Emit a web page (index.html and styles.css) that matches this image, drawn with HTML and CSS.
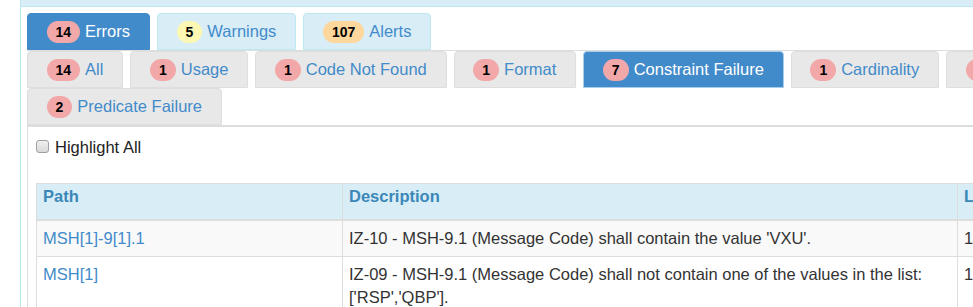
FILE: index.html
```html
<!DOCTYPE html>
<html>
<head>
<meta charset="utf-8">
<title>Validation Report</title>
<link rel="stylesheet" href="styles.css">
</head>
<body>
<div class="panel">
  <div class="panel-heading"></div>
  <div class="panel-body">
    <ul class="nav main-nav">
      <li class="tab active"><span class="badge b-err">14</span>Errors</li>
      <li class="tab info"><span class="badge b-warn">5</span>Warnings</li>
      <li class="tab info"><span class="badge b-alert">107</span>Alerts</li>
    </ul>
    <ul class="nav sub-nav">
      <li class="tab gray"><span class="badge b-err">14</span>All</li>
      <li class="tab gray"><span class="badge b-err">1</span>Usage</li>
      <li class="tab gray"><span class="badge b-err">1</span>Code Not Found</li>
      <li class="tab gray"><span class="badge b-err">1</span>Format</li>
      <li class="tab active"><span class="badge b-err">7</span>Constraint Failure</li>
      <li class="tab gray"><span class="badge b-err">1</span>Cardinality</li>
      <li class="tab gray"><span class="badge b-err">1</span>Length</li>
      <li class="tab gray"><span class="badge b-err">2</span>Predicate Failure</li>
    </ul>
    <div class="tab-content">
      <label class="highlight"><input type="checkbox" class="check">Highlight All</label>
      <table class="report">
        <colgroup>
          <col class="c-path">
          <col class="c-desc">
          <col class="c-line">
        </colgroup>
        <thead>
          <tr><th>Path</th><th>Description</th><th>Line</th></tr>
        </thead>
        <tbody>
          <tr>
            <td><a class="link" href="#">MSH[1]-9[1].1</a></td>
            <td>IZ-10 - MSH-9.1 (Message Code) shall contain the value 'VXU'.</td>
            <td>1</td>
          </tr>
          <tr>
            <td><a class="link" href="#">MSH[1]</a></td>
            <td>IZ-09 - MSH-9.1 (Message Code) shall not contain one of the values in the list: ['RSP','QBP'].</td>
            <td>1</td>
          </tr>
        </tbody>
      </table>
    </div>
  </div>
</div>
</body>
</html>
```
FILE: styles.css
```css
html, body {
  margin: 0;
  padding: 0;
  overflow: hidden;
  background: #fff;
}
body {
  font-family: "Liberation Sans", Arial, sans-serif;
  font-size: 16.5px;
  line-height: 22.86px;
  color: #333;
}
.panel {
  margin-left: 20px;
  width: 1150px;
  border-left: 1px solid #bce8f1;
  border-right: 1px solid #bce8f1;
}
.panel-heading {
  height: 6px;
  background: #d9edf7;
  border-bottom: 1px solid #bce8f1;
}
.panel-body {
  padding: 6px 0 0 6px;
}
.nav {
  list-style: none;
  margin: 0;
  padding: 0;
  display: flex;
  flex-wrap: wrap;
  column-gap: 7px;
}
.main-nav {
  border-bottom: 1px solid #ddd;
}
.tab {
  display: flex;
  align-items: center;
  gap: 5px;
  height: 37px;
  box-sizing: border-box;
  padding: 0 19px;
  border: 1px solid transparent;
  border-radius: 4px 4px 0 0;
  color: #428bca;
  white-space: nowrap;
}
.main-nav .tab {
  padding: 0 19px 0 18.5px;
}
.tab.active {
  background: #428bca;
  border-color: #428bca;
  color: #fff;
}
.sub-nav .tab {
  padding: 0 19px 0 18.5px;
}
.sub-nav .tab.active {
  border-color: #a9cdea;
}
.tab.info {
  background: #d9edf7;
  border-color: #bce8f1;
}
.tab.gray {
  background: #e8e8e8;
  border-color: #dedede;
}
.badge {
  display: inline-block;
  font-size: 14px;
  font-weight: bold;
  color: #000;
  line-height: 16px;
  padding: 3px 9px;
  border-radius: 11px;
}
.b-err { background: #f2a8a8; }
.b-warn { background: #fcf8b4; }
.b-alert { background: #fed79c; }
.tab-content {
  border-left: 1px solid #ddd;
  border-top: 2px solid #ddd;
  padding: 8px 0 0 8px;
}
.highlight {
  display: flex;
  align-items: center;
  height: 24px;
  color: #222;
}
.check {
  appearance: none;
  -webkit-appearance: none;
  box-sizing: border-box;
  width: 13px;
  height: 13px;
  margin: 0 6px 1px 0;
  border: 1px solid #a0a0a0;
  border-radius: 3px;
  background: linear-gradient(#f0f0f0, #d8d8d8);
}
.report {
  margin-top: 24px;
  border-collapse: collapse;
  table-layout: fixed;
  width: 1121px;
}
.c-path { width: 306px; }
.c-desc { width: 615px; }
.c-line { width: 200px; }
.report th, .report td {
  border: 1px solid #ddd;
  padding: 6px;
  text-align: left;
  vertical-align: top;
}
.report th {
  background: #d9edf7;
  color: #3a88b8;
  font-weight: bold;
  padding: 1px 6px 11px;
  border-bottom: 2px solid #ddd;
}
.report tbody tr:nth-child(odd) td {
  background: #f9f9f9;
}
.link {
  color: #428bca;
  text-decoration: none;
}
```
